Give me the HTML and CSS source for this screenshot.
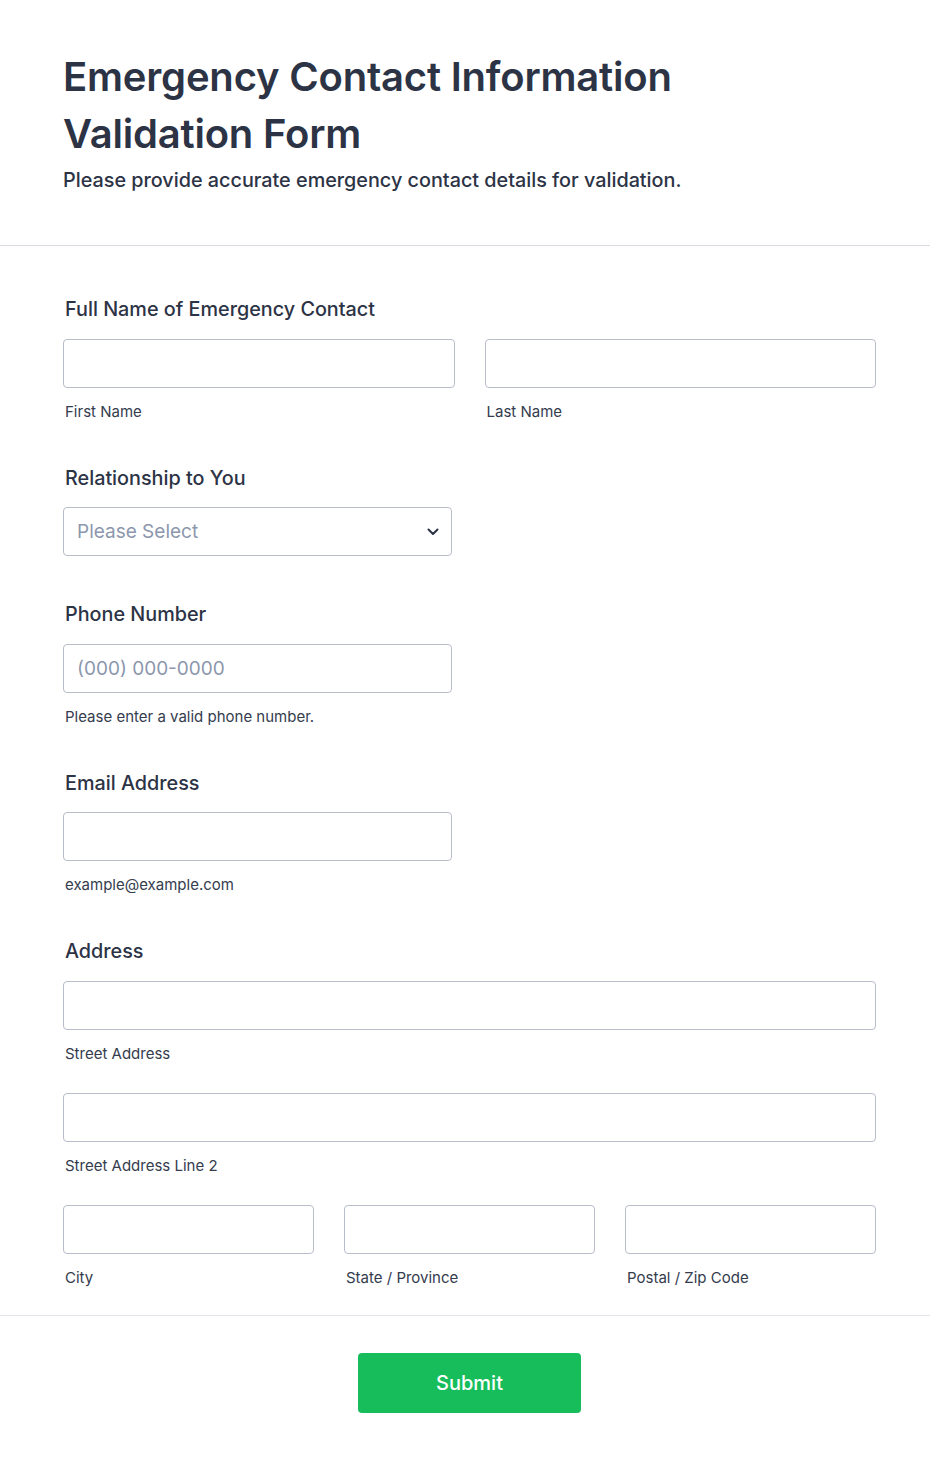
FILE: index.html
```html
<!doctype html>
<html>
    <head>
        <title>Emergency Contact Information Validation Form</title>
        <link rel="stylesheet" href="styles.css">
    </head>
    <body>
        <div class="formHeader">
            <h1 class="formTitle">Emergency Contact Information Validation Form</h1>
            <p class="formSubtitle">Please provide accurate emergency contact details for validation.</p>
        </div>

        <form class="formBody" onsubmit="return false;">
            <div class="field">
                <label class="fieldLabel">Full Name of Emergency Contact</label>
                <div class="row row_2">
                    <div class="sub">
                        <input type="text" class="textInput">
                        <span class="subLabel">First Name</span>
                    </div>
                    <div class="sub">
                        <input type="text" class="textInput">
                        <span class="subLabel">Last Name</span>
                    </div>
                </div>
            </div>

            <div class="field field_select">
                <label class="fieldLabel">Relationship to You</label>
                <div class="selectWrap half">
                    <select class="textInput select">
                        <option>Please Select</option>
                        <option>Spouse</option>
                        <option>Parent</option>
                        <option>Sibling</option>
                        <option>Friend</option>
                    </select>
                    <svg class="chevron" width="12" height="8" viewBox="0 0 12 8"><path d="M1.5 1.5 6 6l4.5-4.5" fill="none" stroke="#2c3345" stroke-width="2" stroke-linecap="round" stroke-linejoin="round"/></svg>
                </div>
            </div>

            <div class="field">
                <label class="fieldLabel">Phone Number</label>
                <div class="half">
                    <input type="tel" class="textInput" placeholder="(000) 000-0000">
                    <span class="subLabel">Please enter a valid phone number.</span>
                </div>
            </div>

            <div class="field">
                <label class="fieldLabel">Email Address</label>
                <div class="half">
                    <input type="email" class="textInput">
                    <span class="subLabel">example@example.com</span>
                </div>
            </div>

            <div class="field field_last">
                <label class="fieldLabel">Address</label>
                <div class="sub">
                    <input type="text" class="textInput">
                    <span class="subLabel">Street Address</span>
                </div>
                <div class="sub">
                    <input type="text" class="textInput">
                    <span class="subLabel">Street Address Line 2</span>
                </div>
                <div class="row row_3">
                    <div class="sub">
                        <input type="text" class="textInput">
                        <span class="subLabel">City</span>
                    </div>
                    <div class="sub">
                        <input type="text" class="textInput">
                        <span class="subLabel">State / Province</span>
                    </div>
                    <div class="sub">
                        <input type="text" class="textInput">
                        <span class="subLabel">Postal / Zip Code</span>
                    </div>
                </div>
            </div>
        </form>

        <div class="formFooter">
            <div class="footerInner">
                <button type="button" class="btn_submit">Submit</button>
            </div>
        </div>
    </body>
</html>
```

FILE: styles.css
```css
html, body {
  margin: 0;
  padding: 0;
  background: #fff;
}

body {
  font-family: Inter, "Noto Sans", Arial, sans-serif;
  color: #2c3345;
}

/* Header */
.formHeader {
  padding: 48px 54px 53px 63px;
  border-bottom: 1px solid #dadde5;
}

.formTitle {
  max-width: 760px;
  margin: 0;
  font-size: 40px;
  line-height: 57px;
  font-weight: 600;
  letter-spacing: -0.2px;
}

.formSubtitle {
  margin: 6px 0 0;
  font-size: 19.8px;
  line-height: 24px;
  font-weight: 500;
}

/* Fields */
.formBody {
  padding: 51px 54px 28.5px 63px;
  border-bottom: 1px solid #e3e5ea;
}

.field {
  margin-bottom: 45px;
}

.field_select {
  margin-bottom: 46px;
}

.field_last {
  margin-bottom: 0;
}

.fieldLabel {
  display: block;
  margin: 0 0 17.5px 2px;
  font-size: 19.8px;
  line-height: 24px;
  font-weight: 500;
}

.row {
  display: grid;
  gap: 30px;
}

.row_2 {
  grid-template-columns: 1fr 1fr;
}

.row_3 {
  grid-template-columns: 1fr 1fr 1fr;
}

.sub {
  margin-bottom: 30px;
}

.row .sub {
  margin-bottom: 0;
}

.half {
  width: 389px;
}

.textInput {
  display: block;
  box-sizing: border-box;
  width: 100%;
  height: 49px;
  margin: 0;
  padding: 0 13px;
  border: 1px solid #b8bdc9;
  border-radius: 4px;
  background: #fff;
  font-family: inherit;
  font-size: 19px;
  color: #2c3345;
  outline: 0;
}

.textInput::placeholder {
  color: #8c97ad;
}

.subLabel {
  display: block;
  margin: 15px 0 0 2px;
  font-size: 15px;
  line-height: 18px;
  color: #343c4e;
}

/* Select */
.selectWrap {
  position: relative;
}

.select {
  -webkit-appearance: none;
  appearance: none;
  color: #8c97ad;
}

.chevron {
  position: absolute;
  right: 13px;
  top: 21px;
  pointer-events: none;
}

/* Footer */
.formFooter {
  padding: 37px 54px 49px 63px;
}

.footerInner {
  display: flex;
  justify-content: center;
}

.btn_submit {
  width: 223px;
  height: 60px;
  border: 0;
  border-radius: 4px;
  background-color: #18bd5b;
  color: #fff;
  font-family: inherit;
  font-size: 20px;
  font-weight: 500;
  cursor: pointer;
}

.btn_submit:hover {
  background-color: #16aa52;
}
```
